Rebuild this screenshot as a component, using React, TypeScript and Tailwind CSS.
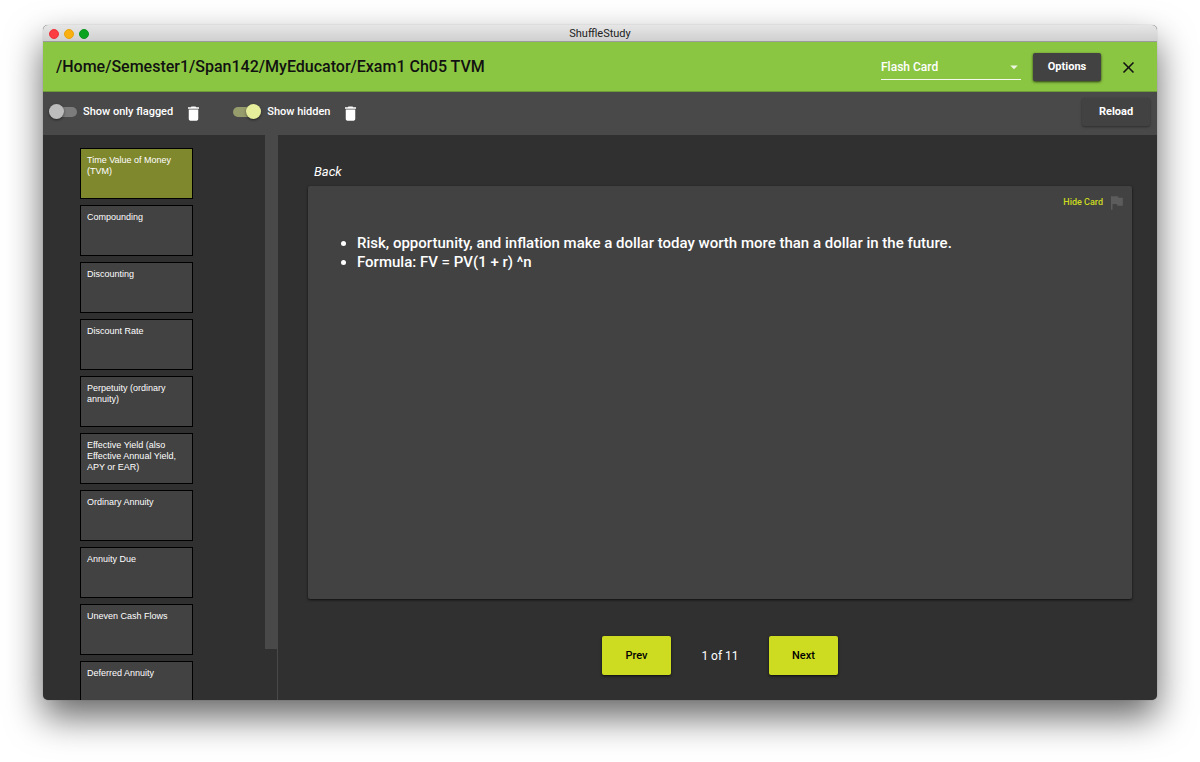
import { useState } from "react";
import { MdArrowDropDown, MdClose, MdDelete, MdFlag } from "react-icons/md";

const cards = [
  "Time Value of Money (TVM)",
  "Compounding",
  "Discounting",
  "Discount Rate",
  "Perpetuity (ordinary annuity)",
  "Effective Yield (also Effective Annual Yield, APY or EAR)",
  "Ordinary Annuity",
  "Annuity Due",
  "Uneven Cash Flows",
  "Deferred Annuity",
];

function TitleBar() {
  return (
    <div className="grid h-[17px] shrink-0 grid-cols-3 items-center border-b border-[#9a9a9a] bg-linear-to-b from-[#e6e6e6] to-[#d0d0d0] px-1.5">
      <div className="flex gap-[5px]">
        <span className="size-2.5 rounded-full border border-[#e8353b] bg-[#fc3d42]" />
        <span className="size-2.5 rounded-full border border-[#e8a20c] bg-[#f9b010]" />
        <span className="size-2.5 rounded-full border border-[#0b9420] bg-[#0aa31f]" />
      </div>
      <h1 className="pt-px text-center text-[11px] leading-4 text-[#222]">ShuffleStudy</h1>
    </div>
  );
}

function Header() {
  return (
    <header className="flex h-[50px] shrink-0 items-center border-b border-[#6f9c38] bg-[#8bc642] pt-px pr-[19px] pl-[13px]">
      <h2 className="flex-1 truncate text-base font-medium text-[#111]">
        /Home/Semester1/Span142/MyEducator/Exam1 Ch05 TVM
      </h2>
      <div className="relative mr-3 w-[140px]">
        <select
          aria-label="Study mode"
          className="h-[26px] w-full appearance-none border-b border-white/90 bg-transparent text-xs font-medium text-white outline-none"
        >
          <option>Flash Card</option>
        </select>
        <MdArrowDropDown className="pointer-events-none absolute top-1 -right-0.5 size-[18px] text-white/85" />
      </div>
      <button className="mr-[18px] h-7 w-[68px] rounded-xs bg-[#424242] pt-px text-[11px] font-bold text-white shadow-sm shadow-black/60">
        Options
      </button>
      <button aria-label="Close" className="text-[#111]">
        <MdClose className="size-[19px]" />
      </button>
    </header>
  );
}

function Toggle({ label, initial }: { label: string; initial: boolean }) {
  const [on, setOn] = useState(initial);
  return (
    <label className="flex items-center gap-1.5 text-[11px] font-medium text-white">
      <input
        type="checkbox"
        role="switch"
        checked={on}
        onChange={() => setOn(!on)}
        className="peer sr-only"
      />
      <span
        className={
          on
            ? "flex h-2.5 w-7 items-center justify-end rounded-full bg-[#979c6c]"
            : "flex h-2.5 w-7 items-center rounded-full bg-[#7c7c7c]"
        }
      >
        <span
          className={
            on
              ? "size-[15px] rounded-full bg-[#e6ee9c] shadow-sm shadow-black/40"
              : "size-[15px] rounded-full bg-[#bdbdbd] shadow-sm shadow-black/40"
          }
        />
      </span>
      <span className="pt-px">{label}</span>
    </label>
  );
}

function Toolbar() {
  return (
    <div className="flex h-[43px] shrink-0 items-center bg-[#494949] pr-[7px] pb-1 pl-1.5">
      <Toggle label="Show only flagged" initial={false} />
      <button aria-label="Clear flags" className="mt-1 mr-[30px] ml-[11px] text-white">
        <MdDelete className="size-[19px]" />
      </button>
      <Toggle label="Show hidden" initial={true} />
      <button aria-label="Clear hidden" className="mt-1 ml-[11px] text-white">
        <MdDelete className="size-[19px]" />
      </button>
      <button className="ml-auto h-7 w-[68px] rounded-xs bg-[#424242] pt-px text-[11px] font-bold text-white shadow-sm shadow-black/30">
        Reload
      </button>
    </div>
  );
}

function Sidebar() {
  return (
    <aside className="flex w-[235px] shrink-0 border-r border-[#494949]">
      <ul className="flex flex-1 flex-col gap-1.5 overflow-hidden pt-[13px] pl-[37px]">
        {cards.map((card, i) => (
          <li key={card} className="shrink-0">
            <button
              className={
                i === 0
                  ? "flex h-[51px] w-[113px] items-start border border-black bg-[#80882e] p-1.5 text-left font-['Liberation_Sans',Arial,sans-serif] text-[9px] leading-[11px] text-white"
                  : "flex h-[51px] w-[113px] items-start border border-black bg-[#424242] p-1.5 text-left font-['Liberation_Sans',Arial,sans-serif] text-[9px] leading-[11px] text-white"
              }
            >
              {card}
            </button>
          </li>
        ))}
      </ul>
      <div className="w-3 shrink-0">
        <div className="h-[91%] bg-[#494949]" />
      </div>
    </aside>
  );
}

function CardView() {
  return (
    <main className="flex min-w-0 flex-1 flex-col pt-7 pr-[25px] pb-[25px] pl-[30px]">
      <h3 className="pl-1.5 text-[13px] leading-[18px] text-white italic">Back</h3>
      <section className="mt-[5px] flex-1 rounded-xs bg-[#424242] shadow-sm shadow-black/60">
        <div className="flex items-center justify-end gap-1 pt-[7px] pr-1.5">
          <button className="text-[9px] font-medium text-[#cddc20]">Hide Card</button>
          <button aria-label="Flag card" className="text-[#5c5c5c]">
            <MdFlag className="size-[19px]" />
          </button>
        </div>
        <ul className="list-disc pt-[22px] pl-[49px] text-[15px] leading-[19px] font-medium text-white">
          <li>
            Risk, opportunity, and inflation make a dollar today worth more than a dollar in the future.
          </li>
          <li>Formula: FV = PV(1 + r) ^n</li>
        </ul>
      </section>
      <nav className="mt-[37px] flex items-center justify-center">
        <button className="h-[39px] w-[69px] rounded-xs bg-[#cddc20] pt-px text-[11px] font-medium text-black shadow-sm shadow-black/60">
          Prev
        </button>
        <span className="w-[98px] text-center text-xs text-white">1 of 11</span>
        <button className="h-[39px] w-[69px] rounded-xs bg-[#cddc20] pt-px text-[11px] font-medium text-black shadow-sm shadow-black/60">
          Next
        </button>
      </nav>
    </main>
  );
}

export default function App() {
  return (
    <div className="flex h-screen min-h-[480px] bg-white px-[43px] pt-[25px] pb-[62px] font-[Roboto,sans-serif]">
      <div className="flex min-w-0 flex-1 flex-col overflow-hidden rounded-[5px] bg-[#303030] shadow-[0_0_1px_rgba(0,0,0,0.4),0_17px_36px_rgba(0,0,0,0.6)]">
        <TitleBar />
        <Header />
        <Toolbar />
        <div className="flex min-h-0 flex-1">
          <Sidebar />
          <CardView />
        </div>
      </div>
    </div>
  );
}
